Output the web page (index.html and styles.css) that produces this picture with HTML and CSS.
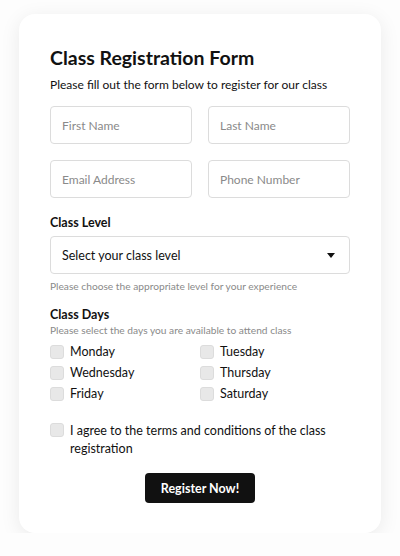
FILE: index.html
```
<!DOCTYPE html>
<html lang="en">
<head>
    <meta charset="UTF-8">
    <meta name="viewport" content="width=device-width, initial-scale=1.0">
    <title>Class Registration Form</title>
    <link rel="stylesheet" href="styles.css">
</head>
<body>
    <div class="card">
        <h1>Class Registration Form</h1>
        <p class="intro">Please fill out the form below to register for our class</p>
        <div class="row">
            <input type="text" placeholder="First Name">
            <input type="text" placeholder="Last Name">
        </div>
        <div class="row">
            <input type="text" placeholder="Email Address">
            <input type="text" placeholder="Phone Number">
        </div>
        <div class="label">Class Level</div>
        <div class="select">
            <span>Select your class level</span>
            <svg width="8" height="5" viewBox="0 0 8 5"><path d="M0 0h8L4 5z" fill="#111"/></svg>
        </div>
        <p class="help">Please choose the appropriate level for your experience</p>
        <div class="label days-label">Class Days</div>
        <p class="help sub">Please select the days you are available to attend class</p>
        <div class="days">
            <label class="check"><span class="box"></span>Monday</label>
            <label class="check"><span class="box"></span>Tuesday</label>
            <label class="check"><span class="box"></span>Wednesday</label>
            <label class="check"><span class="box"></span>Thursday</label>
            <label class="check"><span class="box"></span>Friday</label>
            <label class="check"><span class="box"></span>Saturday</label>
        </div>
        <label class="check terms"><span class="box"></span><span>I agree to the terms and conditions of the class registration</span></label>
        <div class="actions">
            <button class="register">Register Now!</button>
        </div>
    </div>
</body>
</html>
```
FILE: styles.css
```
body {
    margin: 0;
    background: #fdfdfd;
    font-family: Lato, sans-serif;
    color: #111;
}
.card {
    width: 300px;
    margin: 14px auto 0;
    padding: 32px 31px 30px;
    background: #fff;
    border-radius: 16px;
    box-shadow: 0 4px 20px rgba(0, 0, 0, 0.08);
}
h1 {
    margin: 0;
    font-size: 19.5px;
    font-weight: 700;
    line-height: 24px;
}
.intro {
    margin: 6px 0 12px;
    font-size: 12px;
    line-height: 18px;
}
.row {
    display: flex;
    gap: 16px;
    margin-bottom: 16px;
}
.row input {
    flex: 1;
    min-width: 0;
    height: 38px;
    box-sizing: border-box;
    border: 1px solid #dcdcdc;
    border-radius: 4px;
    padding: 0 11px;
    font-family: inherit;
    font-size: 12px;
}
.row input::placeholder {
    color: #8a8a8a;
}
.label {
    font-size: 12.5px;
    font-weight: 700;
    line-height: 18px;
    margin-top: 4px;
}
.select {
    display: flex;
    justify-content: space-between;
    align-items: center;
    height: 38px;
    box-sizing: border-box;
    margin-top: 4px;
    padding: 0 14px 0 11px;
    border: 1px solid #dcdcdc;
    border-radius: 4px;
    font-size: 12.5px;
}
.help {
    margin: 5px 0 0;
    font-size: 10.2px;
    line-height: 14px;
    color: #8a8a8a;
}
.days-label {
    margin-top: 13px;
}
.help.sub {
    margin-top: -1px;
}
.days {
    display: grid;
    grid-template-columns: 150px 150px;
    grid-auto-rows: 14px;
    row-gap: 7px;
    margin-top: 8px;
}
.check {
    display: flex;
    align-items: center;
    gap: 6px;
    font-size: 12.5px;
    line-height: 14px;
}
.box {
    flex: none;
    width: 12px;
    height: 12px;
    background: #e8e8e8;
    border: 1px solid #dcdcdc;
    border-radius: 3px;
}
.terms {
    align-items: flex-start;
    margin-top: 21px;
    line-height: 18px;
}
.terms .box {
    margin-top: 1px;
}
.actions {
    text-align: center;
    margin-top: 15px;
}
.register {
    width: 110px;
    height: 30px;
    border: none;
    border-radius: 4px;
    background: #111;
    color: #fff;
    font-family: inherit;
    font-size: 12.5px;
    font-weight: 700;
}
```
